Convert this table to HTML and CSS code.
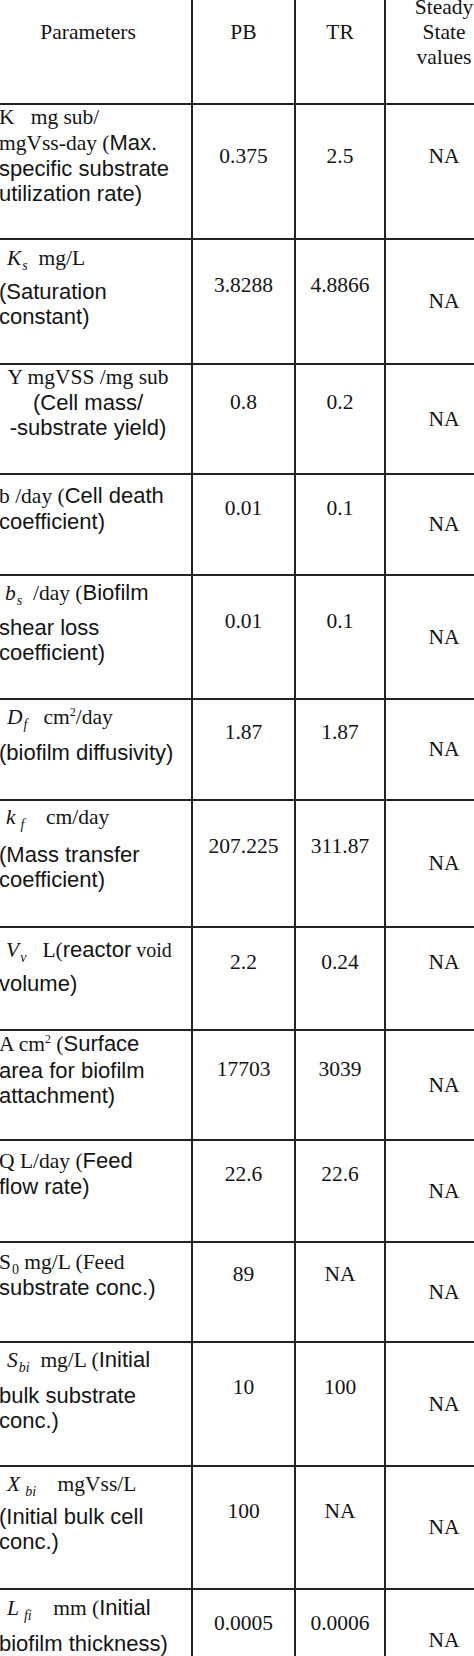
FILE: index.html
```html
<!DOCTYPE html>
<html>
<head>
<meta charset="utf-8">
<title>Parameters table</title>
<link rel="stylesheet" href="styles.css">
</head>
<body>
<div class="page">
  <div class="tbl">
    <div class="row hd">
      <div class="c h hp">Parameters</div>
      <div class="c h">PB</div>
      <div class="c h">TR</div>
      <div class="c h">Steady<br>State<br>values</div>
    </div>

    <div class="row r1">
      <div class="c p">
        <div class="l1 s">K&nbsp;&nbsp;&nbsp;mg sub/</div>
        <div><span class="s">mgVss-day (</span>Max.</div>
        <div>specific substrate</div>
        <div>utilization rate)</div>
      </div>
      <div class="c v">0.375</div>
      <div class="c v">2.5</div>
      <div class="c na top">NA</div>
    </div>

    <div class="row r2">
      <div class="c p">
        <div class="l1 s ind"><i>K</i><span class="sub it">s</span>&nbsp;&nbsp;mg/L</div>
        <div>(Saturation</div>
        <div>constant)</div>
      </div>
      <div class="c v">3.8288</div>
      <div class="c v">4.8866</div>
      <div class="c na">NA</div>
    </div>

    <div class="row r3">
      <div class="c p ctr">
        <div class="l1 s">Y mgVSS /mg sub</div>
        <div>(Cell mass/</div>
        <div>-substrate yield)</div>
      </div>
      <div class="c v">0.8</div>
      <div class="c v">0.2</div>
      <div class="c na">NA</div>
    </div>

    <div class="row r4">
      <div class="c p">
        <div class="l1"><span class="s">b /day (</span>Cell death</div>
        <div>coefficient)</div>
      </div>
      <div class="c v">0.01</div>
      <div class="c v">0.1</div>
      <div class="c na">NA</div>
    </div>

    <div class="row r5">
      <div class="c p">
        <div class="l1 ind5"><span class="s"><i>b</i><span class="sub it">s</span>&nbsp;&nbsp;/day (</span>Biofilm</div>
        <div>shear loss</div>
        <div>coefficient)</div>
      </div>
      <div class="c v">0.01</div>
      <div class="c v">0.1</div>
      <div class="c na">NA</div>
    </div>

    <div class="row r6">
      <div class="c p">
        <div class="l1 s ind"><i>D</i><span class="sub it">f</span>&nbsp;&nbsp;&nbsp;cm<span class="sup">2</span>/day</div>
        <div>(biofilm diffusivity)</div>
      </div>
      <div class="c v">1.87</div>
      <div class="c v">1.87</div>
      <div class="c na">NA</div>
    </div>

    <div class="row r7">
      <div class="c p">
        <div class="l1 s ind6"><i>k</i><span class="sub it gap">f</span>&nbsp;&nbsp;&nbsp;&nbsp;cm/day</div>
        <div>(Mass transfer</div>
        <div>coefficient)</div>
      </div>
      <div class="c v">207.225</div>
      <div class="c v">311.87</div>
      <div class="c na">NA</div>
    </div>

    <div class="row r8">
      <div class="c p">
        <div class="l1 ind6"><span class="s"><i>V</i><span class="sub it">v</span>&nbsp;&nbsp;&nbsp;L(</span>reactor<span class="s sm"> void</span></div>
        <div>volume)</div>
      </div>
      <div class="c v">2.2</div>
      <div class="c v">0.24</div>
      <div class="c na top">NA</div>
    </div>

    <div class="row r9">
      <div class="c p">
        <div class="l1"><span class="s">A cm<span class="sup">2</span> (</span>Surface</div>
        <div>area for biofilm</div>
        <div>attachment)</div>
      </div>
      <div class="c v">17703</div>
      <div class="c v">3039</div>
      <div class="c na">NA</div>
    </div>

    <div class="row r10">
      <div class="c p">
        <div class="l1"><span class="s">Q L/day (</span>Feed</div>
        <div>flow rate)</div>
      </div>
      <div class="c v">22.6</div>
      <div class="c v">22.6</div>
      <div class="c na">NA</div>
    </div>

    <div class="row r11">
      <div class="c p">
        <div class="l1 s">S<span class="sub">0</span> mg/L (Feed</div>
        <div>substrate conc.)</div>
      </div>
      <div class="c v">89</div>
      <div class="c v">NA</div>
      <div class="c na">NA</div>
    </div>

    <div class="row r12">
      <div class="c p">
        <div class="l1 ind"><span class="s"><i>S</i><span class="sub it">bi</span>&nbsp;&nbsp;mg/L (</span>Initial</div>
        <div>bulk substrate</div>
        <div>conc.)</div>
      </div>
      <div class="c v">10</div>
      <div class="c v">100</div>
      <div class="c na">NA</div>
    </div>

    <div class="row r13">
      <div class="c p">
        <div class="l1 s ind"><i>X</i><span class="sub it gap">bi</span>&nbsp;&nbsp;&nbsp;&nbsp;mgVss/L</div>
        <div>(Initial bulk cell</div>
        <div>conc.)</div>
      </div>
      <div class="c v">100</div>
      <div class="c v">NA</div>
      <div class="c na">NA</div>
    </div>

    <div class="row r14">
      <div class="c p">
        <div class="l1 ind"><span class="s"><i>L</i><span class="sub it gap">fi</span>&nbsp;&nbsp;&nbsp;&nbsp;mm (</span>Initial</div>
        <div>biofilm thickness)</div>
      </div>
      <div class="c v">0.0005</div>
      <div class="c v">0.0006</div>
      <div class="c na">NA</div>
    </div>
  </div>
</div>
</body>
</html>
```

FILE: styles.css
```css
html, body {
  margin: 0;
  padding: 0;
  background: #ffffff;
}

.page {
  width: 474px;
  height: 1656px;
  overflow: hidden;
  background: #ffffff;
  color: #141414;
  font-family: "Liberation Sans", Arial, sans-serif;
  font-size: 22px;
  line-height: 25px;
}

.tbl {
  margin-left: -14px;
  margin-top: -38px;
  width: 518px;
}

.row {
  display: grid;
  grid-template-columns: 207px 103px 90px 118px;
  height: var(--h);
}

.c {
  box-sizing: border-box;
  border-right: 2px solid #232323;
  border-bottom: 2px solid #232323;
  min-width: 0;
}

/* header */
.hd { --h: 143px; }

.h {
  display: flex;
  align-items: center;
  justify-content: center;
  text-align: center;
  font-family: "Liberation Serif", "Times New Roman", serif;
  font-size: 21.5px;
}

.hp {
  padding: 0 14px 0 13px;
}

/* parameter column */
.p {
  padding: 0 14px 0 13px;
  white-space: nowrap;
}

.p.ctr {
  text-align: center;
}

.l1 {
  padding-top: var(--a);
  padding-bottom: var(--b);
}

.ind { padding-left: 8px; }
.ind5 { padding-left: 6px; }
.ind6 { padding-left: 7px; }

.s {
  font-family: "Liberation Serif", "Times New Roman", serif;
  font-size: 21.5px;
}

.sm {
  font-size: 20px;
}

.sub {
  font-size: 14px;
  line-height: 0;
  vertical-align: -5px;
  margin-left: 1px;
}

.sub.it {
  font-style: italic;
}

.sub.gap {
  margin-left: 5px;
}

.sup {
  font-size: 12px;
  line-height: 0;
  vertical-align: 8px;
}

/* value columns */
.v {
  text-align: center;
  padding-top: var(--pv);
  font-family: "Liberation Serif", "Times New Roman", serif;
  font-size: 21.5px;
}

.na {
  display: flex;
  align-items: center;
  justify-content: center;
  font-family: "Liberation Serif", "Times New Roman", serif;
  font-size: 21.5px;
}

.na.top {
  align-items: flex-start;
  padding-top: var(--pv);
}

/* rows */
.r1  { --h: 135px; --a: 0px; --b: 0px;  --pv: 39px; }
.r2  { --h: 125px; --a: 6px; --b: 8px;  --pv: 33px; }
.r3  { --h: 110px; --a: 0px; --b: 0px;  --pv: 25px; }
.r4  { --h: 101px; --a: 8px; --b: 0px;  --pv: 21px; }
.r5  { --h: 124px; --a: 4px; --b: 9px;  --pv: 33px; }
.r6  { --h: 101px; --a: 5px; --b: 10px; --pv: 20px; }
.r7  { --h: 127px; --a: 4px; --b: 12px; --pv: 33px; }
.r8  { --h: 103px; --a: 9px; --b: 8px;  --pv: 22px; }
.r9  { --h: 110px; --a: 0px; --b: 1px;  --pv: 26px; }
.r10 { --h: 102px; --a: 7px; --b: 0px;  --pv: 21px; }
.r11 { --h: 100px; --a: 7px; --b: 0px;  --pv: 19px; }
.r12 { --h: 124px; --a: 4px; --b: 10px; --pv: 32px; }
.r13 { --h: 123px; --a: 5px; --b: 7px;  --pv: 32px; }
.r14 { --h: 102px; --a: 5px; --b: 10px; --pv: 21px; }
```
